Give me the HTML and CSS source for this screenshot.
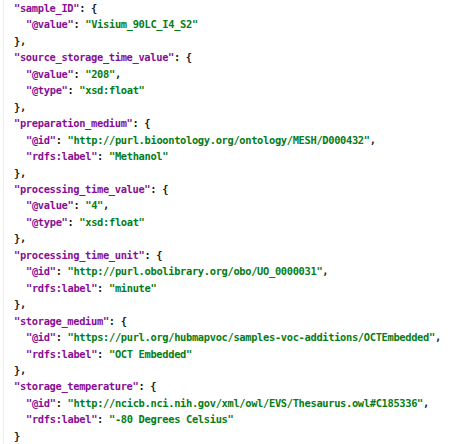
FILE: index.html
```html
<!DOCTYPE html>
<html>
<head>
<meta charset="utf-8">
<link rel="stylesheet" href="styles.css">
</head>
<body>
<div class="code">
<div class="block">
<div class="ln"><span class="k">"sample_ID"</span>: {</div>
<div class="inner"><div class="ln"><span class="k">"@value"</span>: <span class="s">"Visium_90LC_I4_S2"</span></div></div>
<div class="ln">},</div>
</div>
<div class="block">
<div class="ln"><span class="k">"source_storage_time_value"</span>: {</div>
<div class="inner">
<div class="ln"><span class="k">"@value"</span>: <span class="s">"208"</span>,</div>
<div class="ln"><span class="k">"@type"</span>: <span class="s">"xsd:float"</span></div>
</div>
<div class="ln">},</div>
</div>
<div class="block">
<div class="ln"><span class="k">"preparation_medium"</span>: {</div>
<div class="inner">
<div class="ln"><span class="k">"@id"</span>: <span class="s">"http://purl.bioontology.org/ontology/MESH/D000432"</span>,</div>
<div class="ln"><span class="k">"rdfs:label"</span>: <span class="s">"Methanol"</span></div>
</div>
<div class="ln">},</div>
</div>
<div class="block">
<div class="ln"><span class="k">"processing_time_value"</span>: {</div>
<div class="inner">
<div class="ln"><span class="k">"@value"</span>: <span class="s">"4"</span>,</div>
<div class="ln"><span class="k">"@type"</span>: <span class="s">"xsd:float"</span></div>
</div>
<div class="ln">},</div>
</div>
<div class="block">
<div class="ln"><span class="k">"processing_time_unit"</span>: {</div>
<div class="inner">
<div class="ln"><span class="k">"@id"</span>: <span class="s">"http://purl.obolibrary.org/obo/UO_0000031"</span>,</div>
<div class="ln"><span class="k">"rdfs:label"</span>: <span class="s">"minute"</span></div>
</div>
<div class="ln">},</div>
</div>
<div class="block">
<div class="ln"><span class="k">"storage_medium"</span>: {</div>
<div class="inner">
<div class="ln"><span class="k">"@id"</span>: <span class="s">"https://purl.org/hubmapvoc/samples-voc-additions/OCTEmbedded"</span>,</div>
<div class="ln"><span class="k">"rdfs:label"</span>: <span class="s">"OCT Embedded"</span></div>
</div>
<div class="ln">},</div>
</div>
<div class="block">
<div class="ln"><span class="k">"storage_temperature"</span>: {</div>
<div class="inner">
<div class="ln"><span class="k">"@id"</span>: <span class="s">"http://ncicb.nci.nih.gov/xml/owl/EVS/Thesaurus.owl#C185336"</span>,</div>
<div class="ln"><span class="k">"rdfs:label"</span>: <span class="s">"-80 Degrees Celsius"</span></div>
</div>
<div class="ln">}</div>
</div>
</div>
</body>
</html>
```
FILE: styles.css
```css
html, body {
  margin: 0;
  padding: 0;
  background: #ffffff;
}
.code {
  font-family: "DejaVu Sans Mono", "Liberation Mono", monospace;
  font-size: 10.4px;
  letter-spacing: -0.33px;
  font-weight: bold;
  line-height: 16.46px;
  color: #1a1a1a;
  margin-left: 3px;
  padding-left: 10px;
  border-left: 1px solid #ededed;
}
.ln {
  white-space: pre;
}
.inner {
  padding-left: 12px;
}
.k {
  color: #871094;
}
.s {
  color: #067d17;
}
```
